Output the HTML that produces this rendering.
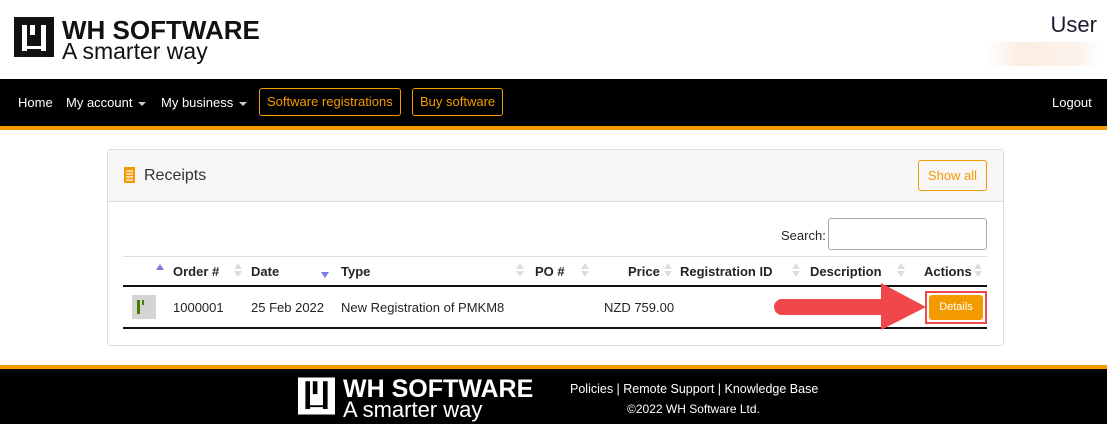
<!DOCTYPE html>
<html><head><meta charset="utf-8"><style>
*{box-sizing:border-box;margin:0;padding:0}
body{width:1107px;height:424px;overflow:hidden;background:#fff;font-family:"Liberation Sans",sans-serif;color:#212529;position:relative}
.abs{position:absolute}
.brand1{font-weight:bold;font-size:26px;line-height:27px}
.brand2{font-size:23px;line-height:24px}
nav{position:absolute;left:0;top:79px;width:1107px;height:47px;background:#000;border-bottom:4px solid #f39a00;box-sizing:content-box}
nav span{position:absolute;top:0;color:#fff;font-size:13px;line-height:47px}
.ob{position:absolute;top:9px;height:28px;border:1px solid #f39a00;border-radius:3px;color:#f39a00;font-size:13px;line-height:26px;padding:0 7px}
.caret{display:inline-block;border-left:4px solid transparent;border-right:4px solid transparent;border-top:4px solid #ccc;vertical-align:middle;margin-left:6px}
.card{position:absolute;left:107px;top:149px;width:897px;height:197px;border:1px solid #ddd;border-radius:3px}
.ch{height:52px;background:#f7f7f7;border-bottom:1px solid #ddd}
.t{position:absolute;font-size:13px}
.sort{position:absolute;width:0;height:0;border-left:4px solid transparent;border-right:4px solid transparent}
.up{border-bottom:6px solid #ddd}.dn{border-top:6px solid #ddd}
footer{position:absolute;left:0;top:365px;width:1107px;height:59px;background:#000;border-top:4px solid #f39a00}
</style></head><body>
<svg class="abs" style="left:14px;top:17px" width="40" height="40" viewBox="0 0 40 40"><rect width="40" height="40" fill="#111"/><path d="M8 8h5v21h14V8h5v26h-5v-2H13v2H8z M16 8h5v10h-5z" fill="#fff"/></svg>
<div class="abs brand1" style="left:62px;top:17px;color:#111">WH SOFTWARE</div>
<div class="abs brand2" style="left:62px;top:39px;color:#111">A smarter way</div>
<div class="abs" style="right:10px;top:12px;font-size:22px;color:#1a1a2e">User</div>
<div class="abs" style="left:985px;top:42px;width:115px;height:24px;background:linear-gradient(90deg,#fff,#fbeee2 30%,#fcf2ea 80%,#fff)"></div>
<nav>
<span style="left:18px">Home</span>
<span style="left:66px">My account<i class="caret"></i></span>
<span style="left:161px">My business<i class="caret"></i></span>
<div class="ob" style="left:259px">Software registrations</div>
<div class="ob" style="left:412px">Buy software</div>
<span style="left:1052px">Logout</span>
</nav>
<div class="card">
<div class="ch">
<svg class="abs" style="left:16px;top:17px" width="11" height="16" viewBox="0 0 11 16"><path d="M0 0h11v16H0z" fill="#f39a00"/><path d="M2 4h7M2 7h7M2 10h7M2 13h7" stroke="#fff" stroke-width="1.2"/></svg>
<div class="abs" style="left:36px;top:17px;font-size:16px;color:#333">Receipts</div>
<div class="abs" style="left:810px;top:10px;width:69px;height:31px;border:1px solid #f39a00;border-radius:3px;color:#f39a00;font-size:13px;line-height:29px;text-align:center">Show all</div>
</div>
<div class="t" style="left:673px;top:78px">Search:</div>
<div class="abs" style="left:720px;top:68px;width:159px;height:32px;border:1px solid #aaa;border-radius:3px"></div>
<div class="abs" style="left:15px;top:106px;width:864px;height:1px;background:#ddd"></div>
<div class="abs" style="left:15px;top:135px;width:864px;height:2px;background:#111"></div>
<div class="abs" style="left:15px;top:177px;width:864px;height:2px;background:#111"></div>
<div class="sort up" style="left:48px;top:114px;border-bottom-color:#7a7ae0"></div>
<div class="t" style="left:65px;top:114px;font-weight:bold">Order #</div>
<div class="sort up" style="left:126px;top:113px"></div><div class="sort dn" style="left:126px;top:121px"></div>
<div class="t" style="left:143px;top:114px;font-weight:bold">Date</div>
<div class="sort dn" style="left:213px;top:122px;border-top-color:#7a7ae0"></div>
<div class="t" style="left:233px;top:114px;font-weight:bold">Type</div>
<div class="sort up" style="left:408px;top:113px"></div><div class="sort dn" style="left:408px;top:121px"></div>
<div class="t" style="left:427px;top:114px;font-weight:bold">PO #</div>
<div class="sort up" style="left:473px;top:113px"></div><div class="sort dn" style="left:473px;top:121px"></div>
<div class="t" style="left:520px;top:114px;font-weight:bold">Price</div>
<div class="sort up" style="left:556px;top:113px"></div><div class="sort dn" style="left:556px;top:121px"></div>
<div class="t" style="left:572px;top:114px;font-weight:bold">Registration ID</div>
<div class="sort up" style="left:684px;top:113px"></div><div class="sort dn" style="left:684px;top:121px"></div>
<div class="t" style="left:702px;top:114px;font-weight:bold">Description</div>
<div class="sort up" style="left:789px;top:113px"></div><div class="sort dn" style="left:789px;top:121px"></div>
<div class="t" style="left:816px;top:114px;font-weight:bold">Actions</div>
<div class="sort up" style="left:866px;top:113px"></div><div class="sort dn" style="left:866px;top:121px"></div>
<div class="abs" style="left:24px;top:145px;width:24px;height:24px;background:#d4d4d4"><div class="abs" style="left:5px;top:5px;width:3px;height:14px;background:#4a7a00"></div><div class="abs" style="left:10px;top:5px;width:2px;height:5px;background:#4a7a00"></div></div>
<div class="t" style="left:65px;top:150px">1000001</div>
<div class="t" style="left:143px;top:150px">25 Feb 2022</div>
<div class="t" style="left:233px;top:150px">New Registration of PMKM8</div>
<div class="t" style="left:496px;top:150px">NZD 759.00</div>
<svg class="abs" style="left:664px;top:132px" width="160" height="50"><path d="M10 17h99V1l45 24-45 23V33H10a8 8 0 0 1 0-16z" fill="#f0474a"/></svg>
<div class="abs" style="left:817px;top:141px;width:62px;height:33px;border:2px solid #f0474a"></div>
<div class="abs" style="left:821px;top:145px;width:54px;height:25px;background:#f39a00;border-radius:3px;color:#fff;font-size:11px;line-height:25px;text-align:center">Details</div>
</div>
<footer>
<svg class="abs" style="left:298px;top:8px" width="37" height="38" viewBox="0 0 40 40"><rect width="40" height="40" fill="#fff"/><path d="M8 0h5v26h14V0h5v30h-5v-2H13v2H8z M16 0h5v14h-5z" fill="#000" transform="translate(0,4)"/></svg>
<div class="abs brand1" style="left:343px;top:7px;color:#fff;font-size:25px">WH SOFTWARE</div>
<div class="abs brand2" style="left:343px;top:29px;color:#fff;font-size:22px">A smarter way</div>
<div class="abs" style="left:570px;top:13px;color:#fff;font-size:12.5px">Policies | Remote Support | Knowledge Base</div>
<div class="abs" style="left:627px;top:33px;color:#fff;font-size:12px">©2022 WH Software Ltd.</div>
</footer>
</body></html>
